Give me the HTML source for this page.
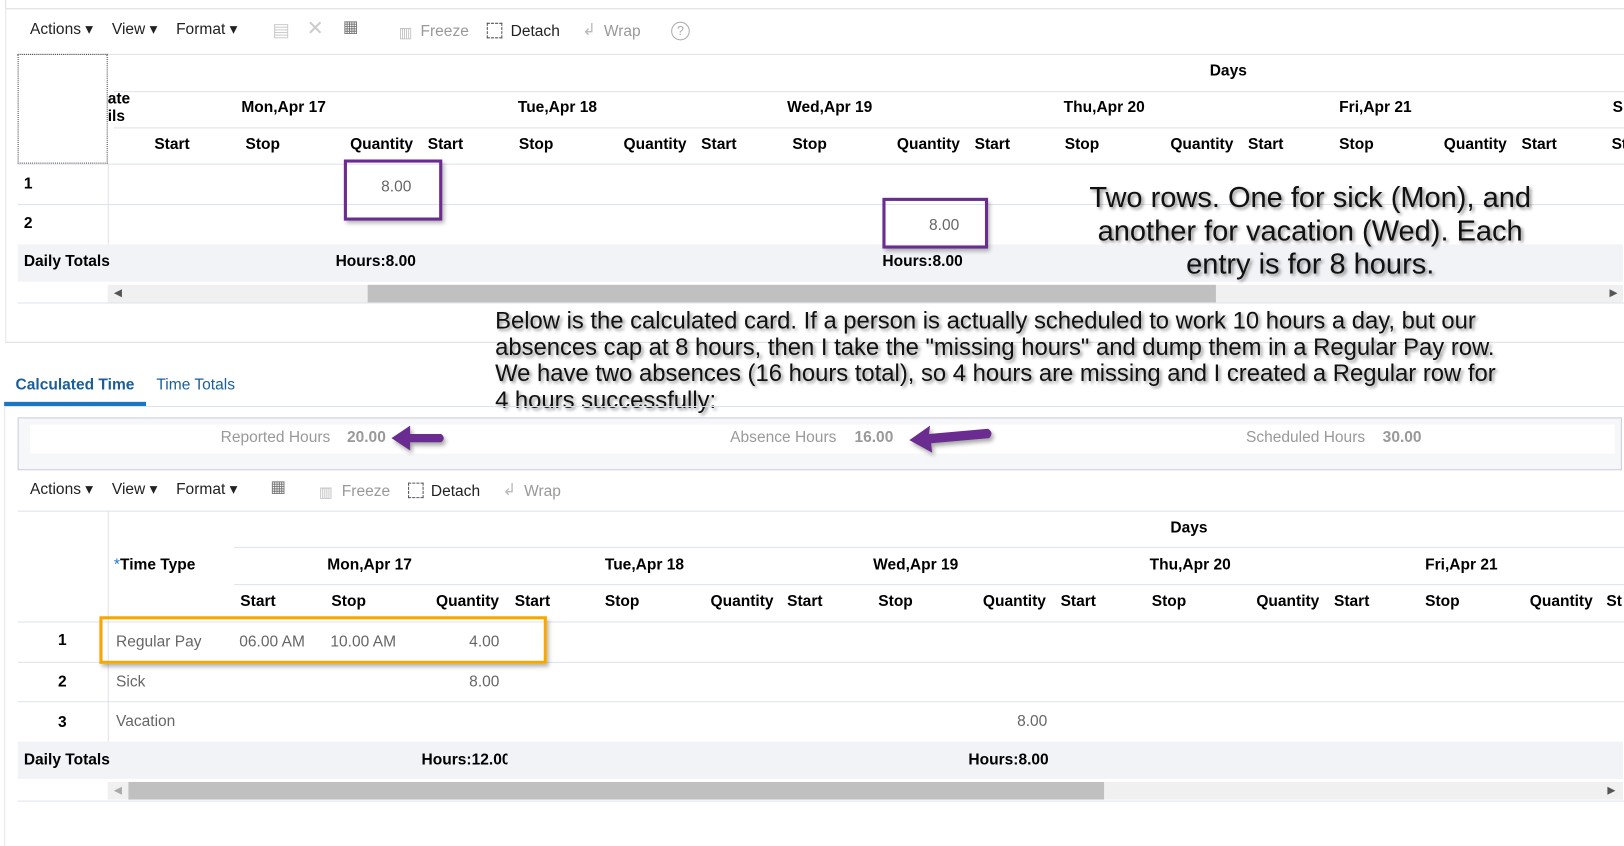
<!DOCTYPE html>
<html><head><meta charset="utf-8"><style>
body{margin:0;width:1624px;height:817px;background:#fff;position:relative;overflow:hidden;font-family:"Liberation Sans",Arial,sans-serif;}
#w{position:absolute;left:0;top:0;width:1568px;height:789px;transform:scale(1.03571);transform-origin:0 0;}
#w div{position:absolute;}
.t{white-space:nowrap;font-size:15px;line-height:16px;color:#000;}
.b{font-weight:bold;}
.g{color:#666;}
.gl{color:#999;}
.hl{height:1px;background:#dde3ea;}
.ann{white-space:nowrap;color:#111;text-shadow:2px 2px 3px rgba(0,0,0,.45);}
.tb{font-size:15px;color:#222;}
</style></head><body><div id="w">

<div style="left:5px;top:0;width:1619px;height:8px;border:1px solid #d9dde2;border-top:none;"></div>
<div style="left:5px;top:8px;width:1px;height:322px;background:#e2e6ea"></div>
<div class="hl" style="left:5px;top:330px;width:1619px;background:#d9dde2"></div>

<div class="t tb" style="left:29px;top:21px">Actions ▾</div>
<div class="t tb" style="left:108px;top:21px">View ▾</div>
<div class="t tb" style="left:170px;top:21px">Format ▾</div>
<div class="t" style="left:263px;top:21px;color:#ccc;font-size:18px">▤</div>
<div class="t" style="left:296px;top:20px;color:#ccc;font-size:20px">✕</div>
<div class="t" style="left:331px;top:19px;color:#777;font-size:16px">▦</div>
<div class="t" style="left:385px;top:23px;color:#bbb;font-size:14px">▥</div>
<div class="t tb" style="left:406px;top:23px;color:#999">Freeze</div>
<div style="left:470px;top:22px;width:13px;height:13px;border:1px dashed #555"></div>
<div class="t tb" style="left:493px;top:23px">Detach</div>
<div class="t" style="left:562px;top:22px;color:#bbb;font-size:16px">↲</div>
<div class="t tb" style="left:583px;top:23px;color:#999">Wrap</div>
<div style="left:648px;top:21px;width:16px;height:16px;border:1px solid #aaa;border-radius:50%;color:#aaa;font-size:12px;text-align:center;line-height:16px">?</div>

<div class="hl" style="left:17px;top:52px;width:1607px"></div>
<div style="left:17px;top:52px;width:87px;height:106px;border:1px dotted #444;box-sizing:border-box"></div>
<div style="left:104px;top:158px;width:1px;height:78px;background:#dde3ea"></div>
<div class="hl" style="left:110px;top:88px;width:1514px"></div>
<div class="hl" style="left:110px;top:123px;width:1514px"></div>
<div class="hl" style="left:17px;top:158px;width:1607px"></div>
<div class="hl" style="left:17px;top:197px;width:1607px"></div>
<div style="left:17px;top:236px;width:1550px;height:36px;background:#f1f3f7"></div>
<div class="t b" style="left:1168px;top:61px">Days</div>
<div class="t b" style="left:104px;top:88px">ate</div>
<div class="t b" style="left:104px;top:105px">ils</div>
<div class="t b" style="left:233px;top:96px">Mon,Apr 17</div>
<div class="t b" style="left:500px;top:96px">Tue,Apr 18</div>
<div class="t b" style="left:760px;top:96px">Wed,Apr 19</div>
<div class="t b" style="left:1027px;top:96px">Thu,Apr 20</div>
<div class="t b" style="left:1293px;top:96px">Fri,Apr 21</div>
<div class="t b" style="left:1557px;top:96px">S</div>
<div class="t b" style="left:149px;top:132px">Start</div><div class="t b" style="left:237px;top:132px">Stop</div><div class="t b" style="left:338px;top:132px">Quantity</div>
<div class="t b" style="left:413px;top:132px">Start</div><div class="t b" style="left:501px;top:132px">Stop</div><div class="t b" style="left:602px;top:132px">Quantity</div>
<div class="t b" style="left:677px;top:132px">Start</div><div class="t b" style="left:765px;top:132px">Stop</div><div class="t b" style="left:866px;top:132px">Quantity</div>
<div class="t b" style="left:941px;top:132px">Start</div><div class="t b" style="left:1028px;top:132px">Stop</div><div class="t b" style="left:1130px;top:132px">Quantity</div>
<div class="t b" style="left:1205px;top:132px">Start</div><div class="t b" style="left:1293px;top:132px">Stop</div><div class="t b" style="left:1394px;top:132px">Quantity</div>
<div class="t b" style="left:1469px;top:132px">Start</div><div class="t b" style="left:1556px;top:132px">St</div>
<div class="t b" style="left:23px;top:170px">1</div>
<div class="t b" style="left:23px;top:208px">2</div>
<div class="t g" style="left:368px;top:173px">8.00</div>
<div class="t g" style="left:897px;top:210px">8.00</div>
<div class="t b" style="left:23px;top:245px">Daily Totals</div>
<div class="t b" style="left:324px;top:245px">Hours:8.00</div>
<div class="t b" style="left:852px;top:245px">Hours:8.00</div>
<div style="left:332px;top:154px;width:89px;height:53px;border:3px solid #6a2c91;box-shadow:2px 3px 4px rgba(0,0,0,.3)"></div>
<div style="left:852px;top:191px;width:96px;height:43px;border:3px solid #6a2c91;box-shadow:2px 3px 4px rgba(0,0,0,.3)"></div>
<div style="left:104px;top:275px;width:1463px;height:17px;background:#f0f0f0"></div>
<div style="left:355px;top:275px;width:819px;height:17px;background:#c0c0c0"></div>
<div class="t" style="left:110px;top:276px;font-size:10px;color:#555">◀</div>
<div class="t" style="left:1554px;top:276px;font-size:10px;color:#555">▶</div>
<div class="hl" style="left:17px;top:292px;width:1607px"></div>

<div class="ann" style="left:1040px;top:175px;width:450px;text-align:center;font-size:28px;line-height:32px">Two rows. One for sick (Mon), and<br>another for vacation (Wed). Each<br>entry is for 8 hours.</div>
<div class="ann" style="left:478px;top:297px;font-size:23px;line-height:25.5px;letter-spacing:0">Below is the calculated card. If a person is actually scheduled to work 10 hours a day, but our<br>absences cap at 8 hours, then I take the "missing hours" and dump them in a Regular Pay row.<br>We have two absences (16 hours total), so 4 hours are missing and I created a Regular row for<br>4 hours successfully:</div>

<div class="t b" style="left:15px;top:364px;color:#1b5e9a;font-size:15px">Calculated Time</div>
<div class="t" style="left:151px;top:364px;color:#1b5e9a;font-size:15px">Time Totals</div>
<div style="left:4px;top:388px;width:137px;height:4px;background:#1b76c4"></div>
<div class="hl" style="left:4px;top:392px;width:1620px"></div>

<div style="left:17px;top:403px;width:1549px;height:51px;border:1px solid #ccd;box-sizing:border-box;background:#f6f7f9"></div>
<div style="left:29px;top:410px;width:1530px;height:28px;background:#fff"></div>
<div class="t gl" style="left:213px;top:415px;font-size:15px">Reported Hours</div>
<div class="t b gl" style="left:335px;top:415px;font-size:15px">20.00</div>
<div class="t gl" style="left:705px;top:415px;font-size:15px">Absence Hours</div>
<div class="t b gl" style="left:825px;top:415px;font-size:15px">16.00</div>
<div class="t gl" style="left:1203px;top:415px;font-size:15px">Scheduled Hours</div>
<div class="t b gl" style="left:1335px;top:415px;font-size:15px">30.00</div>
<svg style="position:absolute;left:376px;top:408px;filter:drop-shadow(2px 3px 2px rgba(0,0,0,.35))" width="60" height="32"><path d="M2 15 L20 3 L20 11 L50 11 Q55 15 50 19 L20 19 L20 27 Z" fill="#6a2c91"/></svg>
<svg style="position:absolute;left:876px;top:405px;filter:drop-shadow(2px 3px 2px rgba(0,0,0,.35))" width="90" height="36"><path d="M2 20 L22 6 L21 14 L78 9 Q84 13 79 18 L23 23 L24 32 Z" fill="#6a2c91"/></svg>

<div class="t tb" style="left:29px;top:465px">Actions ▾</div>
<div class="t tb" style="left:108px;top:465px">View ▾</div>
<div class="t tb" style="left:170px;top:465px">Format ▾</div>
<div class="t" style="left:261px;top:463px;color:#777;font-size:16px">▦</div>
<div class="t" style="left:308px;top:467px;color:#bbb;font-size:14px">▥</div>
<div class="t tb" style="left:330px;top:467px;color:#999">Freeze</div>
<div style="left:394px;top:466px;width:13px;height:13px;border:1px dashed #555"></div>
<div class="t tb" style="left:416px;top:467px">Detach</div>
<div class="t" style="left:485px;top:466px;color:#bbb;font-size:16px">↲</div>
<div class="t tb" style="left:506px;top:467px;color:#999">Wrap</div>

<div class="hl" style="left:17px;top:493px;width:1607px"></div>
<div style="left:104px;top:493px;width:1px;height:223px;background:#dde3ea"></div>
<div class="hl" style="left:226px;top:528px;width:1398px"></div>
<div class="hl" style="left:226px;top:564px;width:1398px"></div>
<div class="hl" style="left:17px;top:600px;width:1607px"></div>
<div class="hl" style="left:17px;top:639px;width:1607px"></div>
<div class="hl" style="left:17px;top:677px;width:1607px"></div>
<div style="left:17px;top:716px;width:1550px;height:36px;background:#f1f3f7"></div>
<div class="t b" style="left:1130px;top:502px">Days</div>
<div class="t b" style="left:110px;top:538px"><span style="color:#1b76c4;font-weight:normal">*</span>Time Type</div>
<div class="t b" style="left:316px;top:538px">Mon,Apr 17</div>
<div class="t b" style="left:584px;top:538px">Tue,Apr 18</div>
<div class="t b" style="left:843px;top:538px">Wed,Apr 19</div>
<div class="t b" style="left:1110px;top:538px">Thu,Apr 20</div>
<div class="t b" style="left:1376px;top:538px">Fri,Apr 21</div>
<div class="t b" style="left:232px;top:573px">Start</div><div class="t b" style="left:320px;top:573px">Stop</div><div class="t b" style="left:421px;top:573px">Quantity</div>
<div class="t b" style="left:497px;top:573px">Start</div><div class="t b" style="left:584px;top:573px">Stop</div><div class="t b" style="left:686px;top:573px">Quantity</div>
<div class="t b" style="left:760px;top:573px">Start</div><div class="t b" style="left:848px;top:573px">Stop</div><div class="t b" style="left:949px;top:573px">Quantity</div>
<div class="t b" style="left:1024px;top:573px">Start</div><div class="t b" style="left:1112px;top:573px">Stop</div><div class="t b" style="left:1213px;top:573px">Quantity</div>
<div class="t b" style="left:1288px;top:573px">Start</div><div class="t b" style="left:1376px;top:573px">Stop</div><div class="t b" style="left:1477px;top:573px">Quantity</div>
<div class="t b" style="left:1551px;top:573px">St</div>
<div class="t b" style="left:56px;top:611px">1</div>
<div class="t b" style="left:56px;top:651px">2</div>
<div class="t b" style="left:56px;top:690px">3</div>
<div class="t g" style="left:112px;top:612px">Regular Pay</div>
<div class="t g" style="left:231px;top:612px">06.00 AM</div>
<div class="t g" style="left:319px;top:612px">10.00 AM</div>
<div class="t g" style="left:453px;top:612px">4.00</div>
<div class="t g" style="left:112px;top:651px">Sick</div>
<div class="t g" style="left:453px;top:651px">8.00</div>
<div class="t g" style="left:112px;top:689px">Vacation</div>
<div class="t g" style="left:982px;top:689px">8.00</div>
<div style="left:96px;top:595px;width:426px;height:40px;border:3px solid #f5a800;box-shadow:2px 3px 4px rgba(0,0,0,.3)"></div>
<div class="t b" style="left:23px;top:726px">Daily Totals</div>
<div class="t b" style="left:407px;top:726px;width:83px;overflow:hidden">Hours:12.00</div>
<div class="t b" style="left:935px;top:726px">Hours:8.00</div>
<div style="left:104px;top:755px;width:1463px;height:17px;background:#f0f0f0"></div>
<div style="left:124px;top:755px;width:942px;height:17px;background:#c0c0c0"></div>
<div class="t" style="left:110px;top:756px;font-size:10px;color:#aaa">◀</div>
<div class="t" style="left:1552px;top:756px;font-size:10px;color:#555">▶</div>
<div class="hl" style="left:17px;top:773px;width:1607px"></div>
<div style="left:4px;top:392px;width:1px;height:425px;background:#e2e6ea"></div>
</div></body></html>
